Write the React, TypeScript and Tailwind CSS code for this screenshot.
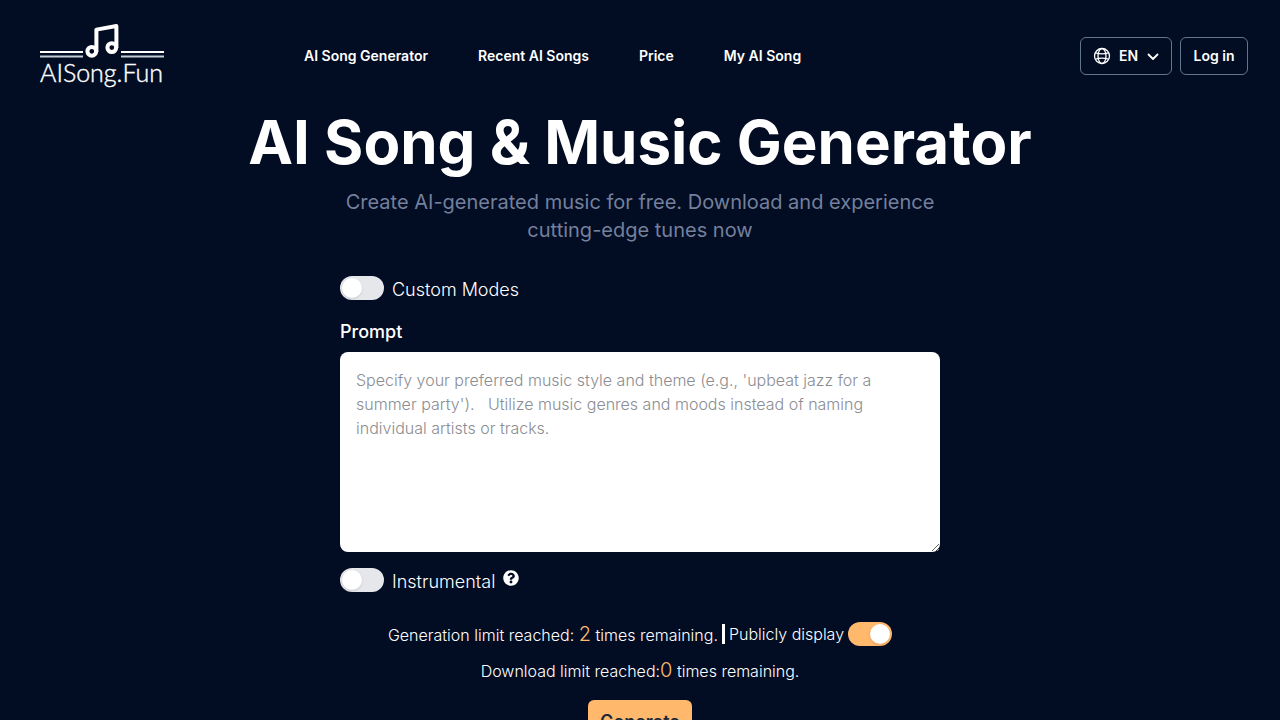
import React, { useState } from "react";
import { FaQuestionCircle } from "react-icons/fa";

type ToggleProps = {
  id: string;
  checked: boolean;
  onChange: (checked: boolean) => void;
};

const navLinks = [
  { label: "AI Song Generator", href: "#generator" },
  { label: "Recent AI Songs", href: "#recent" },
  { label: "Price", href: "#price" },
  { label: "My AI Song", href: "#my-songs" },
];

const Toggle = ({ id, checked, onChange }: ToggleProps) => (
  <input
    id={id}
    type="checkbox"
    checked={checked}
    onChange={(e) => onChange(e.target.checked)}
    className="h-6 w-11 shrink-0 cursor-pointer appearance-none rounded-full bg-gray-200 p-0.5
      before:block before:size-5 before:rounded-full before:bg-white before:shadow-sm
      before:transition-transform checked:bg-[#ffb86c] checked:before:translate-x-5"
  />
);

const Logo = () => (
  <a href="#home" aria-label="AISong.Fun" className="block">
    <svg
      width="124"
      height="64"
      viewBox="0 0 124 64"
      fill="none"
      className="overflow-visible"
    >
      <g stroke="#fff" strokeWidth="2">
        <path d="M0 28H43M81 28H124" />
        <path d="M0 32.5H43M81 32.5H124" stroke="#c3ccd4" />
      </g>
      <g stroke="#fff" strokeWidth="4" strokeLinejoin="round">
        <circle cx="51.8" cy="27.3" r="4.4" />
        <circle cx="71.8" cy="23.6" r="4.4" />
        <path d="M56.4 28V5.6L76.4 2V24" />
      </g>
      <text
        x="0"
        y="58"
        fill="#fff"
        stroke="#fff"
        strokeWidth="0.4"
        fontSize="25"
        fontWeight="300"
        fontFamily="Lato, sans-serif"
      >
        AISong.Fun
      </text>
    </svg>
  </a>
);

const GlobeIcon = () => (
  <svg
    width="18"
    height="18"
    viewBox="0 0 18 18"
    fill="none"
    stroke="currentColor"
    strokeWidth="1.3"
  >
    <circle cx="9" cy="9" r="7.5" />
    <ellipse cx="9" cy="9" rx="4" ry="7.5" />
    <path d="M2.5 5.8Q9 8 15.5 5.8M2.5 12.2Q9 10 15.5 12.2" />
  </svg>
);

const ChevronIcon = () => (
  <svg
    width="12"
    height="12"
    viewBox="0 0 12 12"
    fill="none"
    stroke="currentColor"
    strokeWidth="1.8"
    strokeLinecap="round"
    strokeLinejoin="round"
  >
    <path d="M1.5 4.5L6 9L10.5 4.5" />
  </svg>
);

const Header = () => (
  <header className="flex h-28 items-center px-8">
    <div className="w-68 pl-2">
      <Logo />
    </div>
    <nav className="flex flex-1 gap-[50px] text-sm font-semibold">
      {navLinks.map((link) => (
        <a key={link.label} href={link.href} className="hover:text-[#ffb86c]">
          {link.label}
        </a>
      ))}
    </nav>
    <div className="flex gap-2 text-sm font-semibold">
      <button className="flex h-[38px] w-[92px] items-center rounded-md border border-slate-500 px-3">
        <GlobeIcon />
        <span className="ml-2 flex-1 text-left">EN</span>
        <ChevronIcon />
      </button>
      <button className="h-[38px] w-[68px] rounded-md border border-slate-500">
        Log in
      </button>
    </div>
  </header>
);

const App = () => {
  const [custom, setCustom] = useState(false);
  const [instrumental, setInstrumental] = useState(false);
  const [isPublic, setIsPublic] = useState(true);
  const [prompt, setPrompt] = useState("");

  return (
    <div className="min-h-screen bg-[#020c23] font-['Inter',sans-serif] text-white">
      <Header />
      <main className="mx-auto max-w-[800px] pb-10">
        <h1 className="text-center text-6xl font-bold">
          AI Song &amp; Music Generator
        </h1>
        <p className="mx-auto mt-4 max-w-[608px] text-center text-xl text-[#74809c]">
          Create AI-generated music for free. Download and experience
          cutting-edge tunes now
        </p>

        <form
          className="mx-auto mt-8 max-w-[600px]"
          onSubmit={(e) => e.preventDefault()}
        >
          <div className="flex items-start gap-2">
            <Toggle id="custom" checked={custom} onChange={setCustom} />
            <label htmlFor="custom" className="text-lg font-light">
              Custom Modes
            </label>
          </div>

          <label
            htmlFor="prompt"
            className="mt-3.5 mb-1.5 block text-lg font-medium"
          >
            Prompt
          </label>
          <textarea
            id="prompt"
            value={prompt}
            onChange={(e) => setPrompt(e.target.value)}
            placeholder="Specify your preferred music style and theme (e.g., 'upbeat jazz for a summer party').   Utilize music genres and moods instead of naming individual artists or tracks."
            className="block h-50 w-full rounded-lg bg-white p-4 text-base font-light text-gray-900 placeholder:text-[#8b8d92]"
          />

          <div className="mt-4 flex items-start gap-2">
            <Toggle
              id="instrumental"
              checked={instrumental}
              onChange={setInstrumental}
            />
            <label htmlFor="instrumental" className="text-lg font-light">
              Instrumental
            </label>
            <FaQuestionCircle size={16} className="mt-0.5" />
          </div>

          <div className="mt-6 flex items-center justify-center gap-1 font-light">
            <p>
              Generation limit reached:{" "}
              <span className="text-xl text-[#ffb86c]">2</span> times remaining.
            </p>
            <span className="h-5 w-[3px] bg-white" />
            <label htmlFor="public">Publicly display</label>
            <Toggle id="public" checked={isPublic} onChange={setIsPublic} />
          </div>
          <p className="mt-2 text-center font-light">
            Download limit reached:
            <span className="text-xl text-[#ffb86c]">0</span> times remaining.
          </p>

          <button
            type="submit"
            className="mx-auto mt-4 block rounded-md bg-[#ffb86c] px-3 py-2 text-lg font-semibold text-gray-800"
          >
            Generate
          </button>
        </form>
      </main>
    </div>
  );
};

export default App;
